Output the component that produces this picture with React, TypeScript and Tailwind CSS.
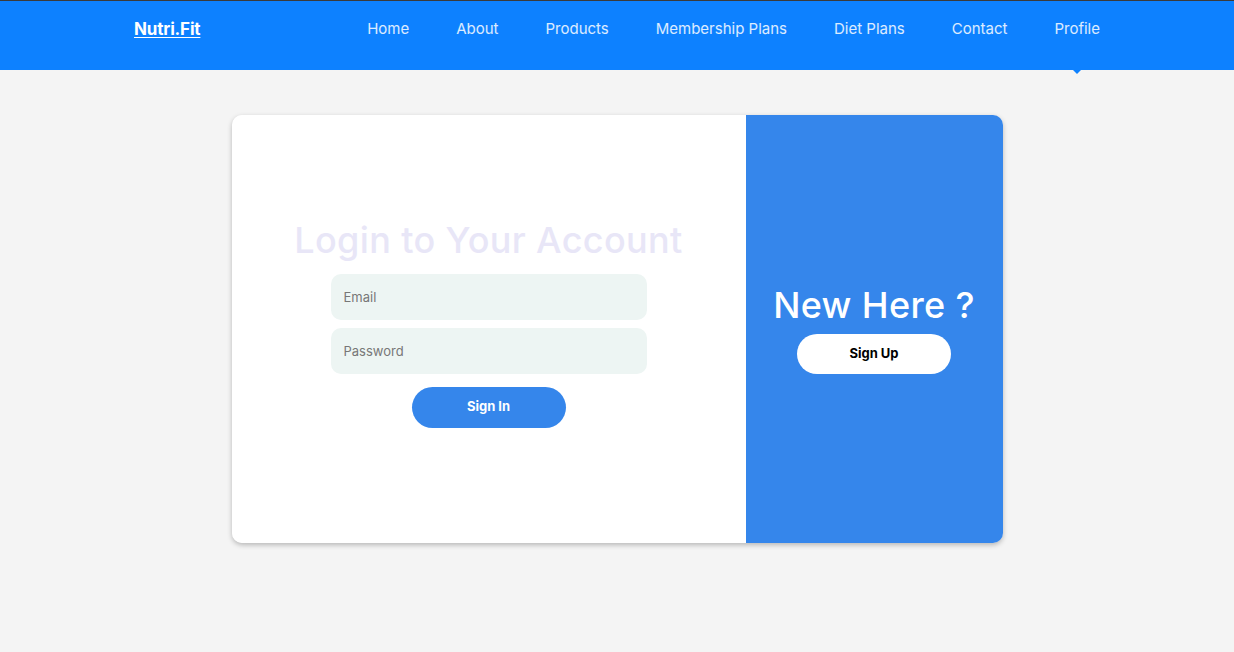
import React from 'react';

const links = ['Home', 'About', 'Products', 'Membership Plans', 'Diet Plans', 'Contact', 'Profile'];

export default function App() {
  return (
    <div className="min-h-[652px] w-full bg-[#f4f4f4] font-['Inter',sans-serif]">
      <nav className="relative h-[70px] border-t border-[#3a3a3a] bg-[#0d81ff]">
        <div className="flex h-full items-center pl-[134px] pr-[134px] pb-[12px]">
          <a href="#" className="text-[17px] font-bold tracking-[-0.01em] text-white underline underline-offset-2">
            Nutri.Fit
          </a>
          <ul className="ml-auto flex items-center gap-[47px]">
            {links.map((l) => (
              <li key={l} className="relative text-[15px] text-white/85">
                {l}
                {l === 'Profile' && (
                  <span className="absolute left-1/2 top-[52px] h-0 w-0 -translate-x-1/2 border-x-[4px] border-t-[4px] border-x-transparent border-t-[#0d81ff]" />
                )}
              </li>
            ))}
          </ul>
        </div>
      </nav>

      <main className="flex justify-center pt-[45px]">
        <div className="flex h-[428px] w-[771px] overflow-hidden rounded-[10px] shadow-[0_2px_5px_rgba(0,0,0,0.25)]">
          <section className="flex w-[514px] flex-col items-center justify-center bg-white pb-[18px]">
            <h1 className="text-[36px] font-medium tracking-[0.01em] text-[#e8e6f7]">Login to Your Account</h1>
            <input
              placeholder="Email"
              className="mt-[7px] h-[46px] w-[316px] rounded-[10px] bg-[#edf5f3] px-[13px] text-[13px] outline-none placeholder:text-[#777]"
            />
            <input
              placeholder="Password"
              type="password"
              className="mt-[8px] h-[46px] w-[316px] rounded-[10px] bg-[#edf5f3] px-[13px] text-[13px] outline-none placeholder:text-[#777]"
            />
            <button className="mt-[13px] h-[41px] w-[154px] rounded-full bg-[#3586eb] text-[13px] font-bold text-white">
              Sign In
            </button>
          </section>
          <section className="flex flex-1 flex-col items-center justify-center bg-[#3586eb] pb-[6px]">
            <h2 className="text-[36px] font-medium tracking-[0.01em] text-white">New Here ?</h2>
            <button className="mt-[2px] h-[40px] w-[154px] rounded-[20px] bg-white text-[13px] font-bold text-black">
              Sign Up
            </button>
          </section>
        </div>
      </main>
    </div>
  );
}
